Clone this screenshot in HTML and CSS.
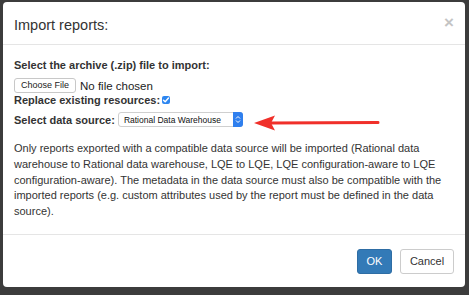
FILE: index.html
```html
<!DOCTYPE html>
<html>
<head>
<meta charset="utf-8">
<link rel="stylesheet" href="styles.css">
</head>
<body>
<div class="backdrop">
  <div class="modal">
    <div class="modal-header">
      <h4 class="title">Import reports:</h4>
      <span class="close">&times;</span>
    </div>
    <div class="modal-body">
      <div class="label">Select the archive (.zip) file to import:</div>
      <div class="file-row">
        <span class="file-btn">Choose File</span>
        <span class="file-text">No file chosen</span>
      </div>
      <div class="label check-row">Replace existing resources:
        <span class="checkbox"><svg width="8" height="8" viewBox="0 0 8 8"><path d="M1.5 4.2 L3.2 5.8 L6.5 2" fill="none" stroke="#fff" stroke-width="1.4" stroke-linecap="round" stroke-linejoin="round"/></svg></span>
      </div>
      <div class="label select-row">Select data source:
        <span class="select"><span class="select-text">Rational Data Warehouse</span><span class="stepper"><svg width="6" height="9" viewBox="0 0 6 9"><path d="M1 3.5 L3 1.5 L5 3.5 M1 5.5 L3 7.5 L5 5.5" fill="none" stroke="#fff" stroke-width="1"/></svg></span></span>
      </div>
      <p class="note">Only reports exported with a compatible data source will be imported (Rational data warehouse to Rational data warehouse, LQE to LQE, LQE configuration-aware to LQE configuration-aware). The metadata in the data source must also be compatible with the imported reports (e.g. custom attributes used by the report must be defined in the data source).</p>
      <svg class="arrow" width="130" height="18" viewBox="0 0 130 18"><path d="M18 9 L125 8.5" stroke="#f0302a" stroke-width="3" stroke-linecap="round"/><path d="M1 9 L22 1.5 L18 9 L22 16.5 Z" fill="#f0302a"/></svg>
    </div>
    <div class="modal-footer">
      <span class="btn btn-primary">OK</span>
      <span class="btn btn-default">Cancel</span>
    </div>
  </div>
</div>
</body>
</html>
```
FILE: styles.css
```css
html, body {
  margin: 0;
  padding: 0;
}
body {
  background: #3c3c3c;
  width: 469px;
  height: 295px;
  overflow: hidden;
  font-family: "Liberation Sans", Arial, sans-serif;
  color: #333;
}
.backdrop {
  padding: 2px 4px 0 3px;
}
.modal {
  background: #fff;
  width: 462px;
  height: 285px;
  border-radius: 4px;
  display: flex;
  flex-direction: column;
  box-sizing: border-box;
}
.modal-header {
  height: 43px;
  border-bottom: 1px solid #e5e5e5;
  display: flex;
  align-items: center;
  justify-content: space-between;
  padding: 3px 11px 0;
  box-sizing: border-box;
}
.title {
  margin: 0;
  font-size: 14.5px;
  font-weight: normal;
  color: #333;
}
.close {
  font-size: 17px;
  font-weight: bold;
  color: #c4c4c4;
  margin-right: 0;
  margin-top: -4px;
}
.modal-body {
  position: relative;
  padding: 13px 11px 0;
  font-size: 11px;
  flex: 1;
}
.label {
  font-weight: bold;
  line-height: 14px;
}
.file-row {
  display: flex;
  align-items: center;
  margin-top: 6px;
  height: 15px;
}
.file-btn {
  display: inline-block;
  font-size: 9px;
  border: 1px solid #c8c8c8;
  border-radius: 3px;
  padding: 1px 6px;
  line-height: 11px;
  background: #fff;
  color: #222;
}
.file-text {
  margin-left: 4px;
  font-size: 11.5px;
  color: #222;
}
.check-row {
  display: flex;
  align-items: center;
  margin-top: 0;
}
.checkbox {
  display: inline-flex;
  align-items: center;
  justify-content: center;
  width: 8px;
  height: 8px;
  background: #2d86f0;
  border-radius: 2px;
  margin-left: 2px;
}
.select-row {
  display: flex;
  align-items: center;
  margin-top: 5px;
}
.select {
  display: inline-flex;
  align-items: center;
  margin-left: 3px;
  height: 15px;
  border: 1px solid #cfcfcf;
  border-radius: 3px;
  box-sizing: border-box;
  font-weight: normal;
}
.select-text {
  font-size: 8.5px;
  color: #111;
  padding: 0 5px 0 5px;
  width: 104px;
}
.stepper {
  width: 10px;
  height: 15px;
  margin: -1px -1px -1px 0;
  background: #2f7fee;
  border-radius: 0 3px 3px 0;
  display: flex;
  align-items: center;
  justify-content: center;
}
.note {
  margin: 14px 0 0;
  line-height: 15.8px;
  font-size: 11px;
}
.arrow {
  position: absolute;
  left: 250px;
  top: 69px;
}
.modal-footer {
  border-top: 1px solid #e5e5e5;
  height: 52px;
  display: flex;
  align-items: center;
  justify-content: flex-end;
  padding: 0 11px 0 0;
  gap: 8px;
}
.btn {
  display: inline-flex;
  align-items: center;
  justify-content: center;
  height: 25px;
  border-radius: 3px;
  font-size: 11px;
  box-sizing: border-box;
}
.btn-primary {
  width: 35px;
  background: #337ab7;
  color: #fff;
  border: 1px solid #2e6da4;
}
.btn-default {
  width: 54px;
  background: #fff;
  color: #333;
  border: 1px solid #ccc;
}
```
